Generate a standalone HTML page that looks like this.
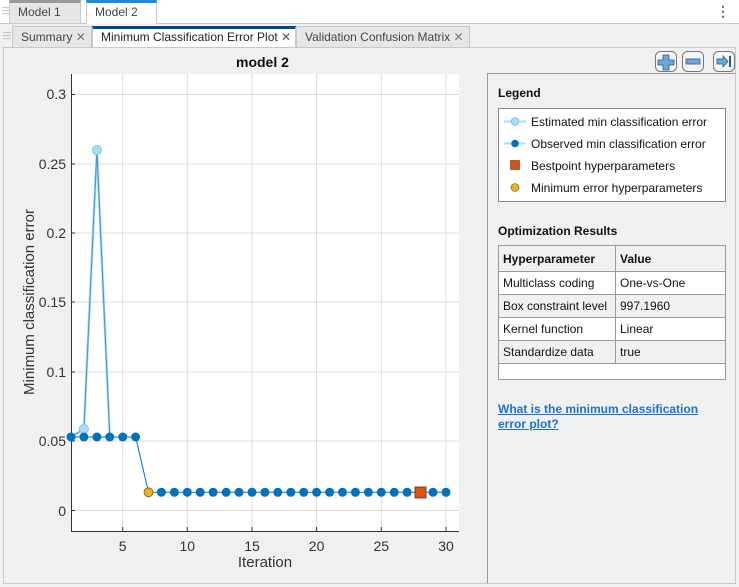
<!DOCTYPE html>
<html><head><style>
body{margin:0;width:739px;height:587px;background:#f0f0f0;font-family:"Liberation Sans",sans-serif;position:relative;overflow:hidden;font-size:12px;color:#222}
.a{position:absolute}
.tab{position:absolute;box-sizing:border-box;border:1px solid #c8c8c8;border-bottom:none;color:#444;font-size:12px;padding-left:8px}
table{border-collapse:collapse}
td{border:1px solid #999;height:22px;padding:0 4px;font-size:12px;color:#111}
</style></head><body>
<div class="a" style="left:0;top:0;width:739px;height:23px;background:#fff;border-bottom:1px solid #c8c8c8"></div>
<div class="a" style="left:2px;top:6px;color:#999;font-size:9px;line-height:3px">—<br>—<br>—</div>
<div class="tab" style="left:9px;top:0;width:72px;height:23px;background:#e6e6e6;border-top:3px solid #999;line-height:19px">Model 1</div>
<div class="tab" style="left:86px;top:0;width:71px;height:24px;background:#fff;border-top:3px solid #1e88e5;line-height:19px">Model 2</div>
<div class="a" style="left:716px;top:3px;color:#666;font-size:14px;font-weight:bold">⋮</div>
<div class="a" style="left:3px;top:31px;color:#999;font-size:8px;line-height:3px">—<br>—<br>—</div>
<div class="tab" style="left:12px;top:26px;width:80px;height:22px;background:#e6e6e6;line-height:21px">Summary <span style="color:#777">✕</span></div>
<div class="tab" style="left:92px;top:26px;width:204px;height:22px;background:#fff;border-top:3px solid #004c8c;line-height:17px;color:#222">Minimum Classification Error Plot <span style="color:#555">✕</span></div>
<div class="tab" style="left:296px;top:26px;width:174px;height:22px;background:#e6e6e6;line-height:21px">Validation Confusion Matrix <span style="color:#777">✕</span></div>
<div class="a" style="left:3px;top:47px;width:731px;height:535px;border:1px solid #c8c8c8"></div>
<div class="a" style="left:236px;top:54px;font-weight:bold;font-size:14px;color:#111">model 2</div>
<svg class="a" style="left:0;top:0" width="739" height="587">
<rect x="71" y="74" width="388" height="457" fill="#fff"/>
<g stroke="#dcdcdc" stroke-width="1">
<line x1="122.7" y1="74" x2="122.7" y2="531"/><line x1="187.3" y1="74" x2="187.3" y2="531"/><line x1="252" y1="74" x2="252" y2="531"/><line x1="316.6" y1="74" x2="316.6" y2="531"/><line x1="381.3" y1="74" x2="381.3" y2="531"/><line x1="446" y1="74" x2="446" y2="531"/>
<line x1="71" y1="94.5" x2="459" y2="94.5"/><line x1="71" y1="164" x2="459" y2="164"/><line x1="71" y1="233" x2="459" y2="233"/><line x1="71" y1="302" x2="459" y2="302"/><line x1="71" y1="372" x2="459" y2="372"/><line x1="71" y1="441" x2="459" y2="441"/><line x1="71" y1="510.5" x2="459" y2="510.5"/>
</g>
<g stroke="#333" stroke-width="1"><line x1="71.5" y1="74" x2="71.5" y2="531"/><line x1="71" y1="531.5" x2="459" y2="531.5"/>
<line x1="71" y1="94.5" x2="75" y2="94.5"/><line x1="71" y1="164" x2="75" y2="164"/><line x1="71" y1="233" x2="75" y2="233"/><line x1="71" y1="302" x2="75" y2="302"/><line x1="71" y1="372" x2="75" y2="372"/><line x1="71" y1="441" x2="75" y2="441"/><line x1="71" y1="510.5" x2="75" y2="510.5"/>
<line x1="122.7" y1="531" x2="122.7" y2="527"/><line x1="187.3" y1="531" x2="187.3" y2="527"/><line x1="252" y1="531" x2="252" y2="527"/><line x1="316.6" y1="531" x2="316.6" y2="527"/><line x1="381.3" y1="531" x2="381.3" y2="527"/><line x1="446" y1="531" x2="446" y2="527"/></g>
<g font-size="14" fill="#333" text-anchor="end"><text x="66" y="99">0.3</text><text x="66" y="169">0.25</text><text x="66" y="238">0.2</text><text x="66" y="307">0.15</text><text x="66" y="377">0.1</text><text x="66" y="446">0.05</text><text x="66" y="516">0</text></g>
<g font-size="14" fill="#333" text-anchor="middle"><text x="122.7" y="551">5</text><text x="187.3" y="551">10</text><text x="252" y="551">15</text><text x="316.6" y="551">20</text><text x="381.3" y="551">25</text><text x="446" y="551">30</text>
<text x="265" y="567" font-size="15">Iteration</text>
<text transform="translate(34,302) rotate(-90)" font-size="15">Minimum classification error</text></g>
<polyline points="71,437 83.9,429 96.9,150 109.8,437" fill="none" stroke="#a9dcf5" stroke-width="2.5"/>
<polyline points="71,437 83.9,429 96.9,150 109.8,437" fill="none" stroke="#3d94cc" stroke-width="1"/>
<polyline points="71,437 135.6,437 148.5,492.3 446,492.3" fill="none" stroke="#0072bd" stroke-width="1"/>
<circle cx="83.9" cy="429" r="4.5" fill="#a9dcf5" stroke="#7cc4ec"/>
<circle cx="96.9" cy="150" r="4.5" fill="#a9dcf5" stroke="#7cc4ec"/>
<g fill="#0072bd">
<circle cx="71" cy="437" r="4.5"/><circle cx="83.9" cy="437" r="4.5"/><circle cx="96.9" cy="437" r="4.5"/><circle cx="109.8" cy="437" r="4.5"/><circle cx="122.7" cy="437" r="4.5"/><circle cx="135.6" cy="437" r="4.5"/>
<circle cx="161.4" cy="492.3" r="4.5"/><circle cx="174.4" cy="492.3" r="4.5"/><circle cx="187.3" cy="492.3" r="4.5"/><circle cx="200.2" cy="492.3" r="4.5"/><circle cx="213.1" cy="492.3" r="4.5"/><circle cx="226.1" cy="492.3" r="4.5"/><circle cx="239" cy="492.3" r="4.5"/><circle cx="252" cy="492.3" r="4.5"/><circle cx="264.9" cy="492.3" r="4.5"/><circle cx="277.8" cy="492.3" r="4.5"/><circle cx="290.8" cy="492.3" r="4.5"/><circle cx="303.7" cy="492.3" r="4.5"/><circle cx="316.6" cy="492.3" r="4.5"/><circle cx="329.6" cy="492.3" r="4.5"/><circle cx="342.5" cy="492.3" r="4.5"/><circle cx="355.4" cy="492.3" r="4.5"/><circle cx="368.4" cy="492.3" r="4.5"/><circle cx="381.3" cy="492.3" r="4.5"/><circle cx="394.2" cy="492.3" r="4.5"/><circle cx="407.1" cy="492.3" r="4.5"/><circle cx="433" cy="492.3" r="4.5"/><circle cx="446" cy="492.3" r="4.5"/></g>
<circle cx="148.5" cy="492.3" r="4.5" fill="#edb120" stroke="#7a5a10" stroke-width="0.8"/>
<rect x="415" y="487" width="11" height="11" fill="#d95319" stroke="#6a2a0a" stroke-width="0.8"/>
<line x1="487.5" y1="73" x2="487.5" y2="583" stroke="#999"/>
<line x1="487" y1="73.5" x2="735" y2="73.5" stroke="#999"/>
<g stroke="#777" fill="#f4f4f4"><rect x="655.5" y="51.5" width="21" height="20" rx="5"/><rect x="682.5" y="51.5" width="21" height="20" rx="5"/><rect x="713.5" y="51.5" width="21" height="20" rx="5"/></g>
<path d="M663 55h6v5h5v5h-5v5h-6v-5h-5v-5h5z" fill="#6aa8dc" stroke="#2a5a8a" stroke-width="0.8"/>
<rect x="686" y="59" width="14" height="5" fill="#6aa8dc" stroke="#2a5a8a" stroke-width="0.8"/>
<path d="M717 59h6v-3l5 5.5-5 5.5v-3h-6z" fill="#6aa8dc" stroke="#2a5a8a" stroke-width="0.8"/>
<rect x="729" y="56" width="2" height="11" fill="#2a5a8a"/>
<rect x="498.5" y="108.5" width="227" height="93" fill="#fff" stroke="#888"/>
<g stroke="#a9dcf5" stroke-width="2"><line x1="504" y1="121.5" x2="526" y2="121.5"/><line x1="504" y1="143.5" x2="526" y2="143.5"/></g>
<circle cx="515" cy="121.5" r="3.8" fill="#a9dcf5" stroke="#7cc4ec"/>
<circle cx="515" cy="143.5" r="3.8" fill="#0072bd"/>
<rect x="510.5" y="160.5" width="9" height="9" fill="#d95319" stroke="#6a2a0a" stroke-width="0.6"/>
<circle cx="515" cy="187.5" r="4" fill="#edb120" stroke="#7a5a10" stroke-width="0.6"/>
<g font-size="12" fill="#111"><text x="531" y="126">Estimated min classification error</text><text x="531" y="148">Observed min classification error</text><text x="531" y="170">Bestpoint hyperparameters</text><text x="531" y="192">Minimum error hyperparameters</text></g>
</svg>
<div class="a" style="left:498px;top:86px;font-weight:bold;font-size:12px;color:#111">Legend</div>
<div class="a" style="left:498px;top:224px;font-weight:bold;font-size:12px;color:#111">Optimization Results</div>
<table class="a" style="left:498px;top:245px;width:228px">
<tr style="background:#f0f0f0"><td style="width:108px;font-weight:bold;height:25px">Hyperparameter</td><td style="font-weight:bold">Value</td></tr>
<tr style="background:#fff"><td>Multiclass coding</td><td>One-vs-One</td></tr>
<tr style="background:#f0f0f0"><td>Box constraint level</td><td>997.1960</td></tr>
<tr style="background:#fff"><td>Kernel function</td><td>Linear</td></tr>
<tr style="background:#f0f0f0"><td>Standardize data</td><td>true</td></tr>
<tr style="background:#fff"><td colspan="2" style="height:15px"></td></tr>
</table>
<div class="a" style="left:498px;top:402px;width:220px;font-weight:bold;font-size:12px;color:#1a73d0;text-decoration:underline;line-height:15px">What is the minimum classification error plot?</div>
</body></html>
